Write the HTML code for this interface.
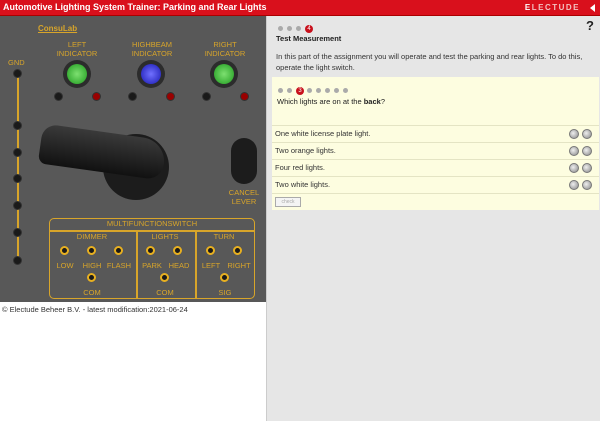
<!DOCTYPE html>
<html><head><style>
*{margin:0;padding:0;box-sizing:border-box}
body{width:600px;height:421px;overflow:hidden;background:#fff;font-family:"Liberation Sans",sans-serif;position:relative}
.hdr{position:absolute;left:0;top:0;width:600px;height:16px;background:#d9101c;border-bottom:1px solid #a00}
.hdr .t{position:absolute;left:3px;top:2px;color:#fff;font-size:9px;font-weight:bold}
.hdr .l{position:absolute;right:20px;top:3px;color:#f3c0c0;font-size:8px;letter-spacing:1.5px;font-weight:bold}
.panel{position:absolute;left:0;top:16px;width:266px;height:286px;background:#585858}
.y{color:#d8a52a;position:absolute;font-size:7.5px;text-align:center;line-height:9px}
.right{position:absolute;left:266px;top:16px;width:334px;height:405px;background:#e6e6e6;border-left:1px solid #ccc}
.dot{display:inline-block;width:5px;height:5px;border-radius:50%;background:#aaa;margin-right:4px;vertical-align:middle}
.rd{display:inline-block;width:8px;height:8px;border-radius:50%;background:#c8101c;color:#fff;font-size:6px;text-align:center;line-height:8px;vertical-align:middle}
.ybox{position:absolute;left:5px;top:61px;width:327px;height:133px;background:#fdfde0}
.row{position:absolute;left:0;width:327px;height:17px;border-top:1px solid #e4e4c4;font-size:7.5px;color:#333;padding:3px 3px}
.rb{position:absolute;top:3px;width:10px;height:10px;border-radius:50%;background:radial-gradient(circle at 40% 40%,#eee,#888);border:1px solid #777}
.bd{position:absolute;width:9px;height:9px;border-radius:50%;background:#1a1a1a;border:1px solid #333}
.jk{position:absolute;width:9px;height:9px;border-radius:50%;background:#1a1a1a;border:2px solid #e8b020}
</style></head><body>
<div class="hdr"><div class="t">Automotive Lighting System Trainer: Parking and Rear Lights</div><div class="l"><span style="color:#fff">E</span>LECTUDE</div>
<div style="position:absolute;right:5px;top:4px;width:0;height:0;border-top:4px solid transparent;border-bottom:4px solid transparent;border-right:5px solid #fff"></div></div>
<div class="panel">
 <div class="y" style="left:38px;top:8px;font-size:8px;font-weight:bold;text-decoration:underline">ConsuLab</div>
 <div class="y" style="left:8px;top:42px">GND</div>
 <div style="position:absolute;left:17px;top:58px;width:2px;height:190px;background:#d8a52a"></div>
 <div class="bd" style="left:13px;top:53px"></div><div class="bd" style="left:13px;top:105px"></div><div class="bd" style="left:13px;top:132px"></div><div class="bd" style="left:13px;top:158px"></div><div class="bd" style="left:13px;top:185px"></div><div class="bd" style="left:13px;top:212px"></div><div class="bd" style="left:13px;top:240px"></div>
 <div class="y" style="left:52px;top:24px;width:50px">LEFT<br>INDICATOR</div>
 <div class="y" style="left:124px;top:24px;width:56px">HIGHBEAM<br>INDICATOR</div>
 <div class="y" style="left:200px;top:24px;width:50px">RIGHT<br>INDICATOR</div>
 <div style="position:absolute;left:63px;top:44px;width:28px;height:28px;border-radius:50%;background:#2c2c2c"></div><div style="position:absolute;left:67px;top:48px;width:20px;height:20px;border-radius:50%;background:radial-gradient(circle,#7de070,#1e9a1e)"></div>
 <div style="position:absolute;left:137px;top:44px;width:28px;height:28px;border-radius:50%;background:#2c2c2c"></div><div style="position:absolute;left:141px;top:48px;width:20px;height:20px;border-radius:50%;background:radial-gradient(circle,#7070ff,#1818b0)"></div>
 <div style="position:absolute;left:210px;top:44px;width:28px;height:28px;border-radius:50%;background:#2c2c2c"></div><div style="position:absolute;left:214px;top:48px;width:20px;height:20px;border-radius:50%;background:radial-gradient(circle,#7de070,#1e9a1e)"></div>
 <div class="bd" style="left:54px;top:76px"></div><div class="bd" style="left:92px;top:76px;background:#900"></div>
 <div class="bd" style="left:128px;top:76px"></div><div class="bd" style="left:166px;top:76px;background:#900"></div>
 <div class="bd" style="left:202px;top:76px"></div><div class="bd" style="left:240px;top:76px;background:#900"></div>
 <div style="position:absolute;left:103px;top:118px;width:66px;height:66px;border-radius:50%;background:#1c1c1c"></div>
 <div style="position:absolute;left:40px;top:116px;width:125px;height:40px;border-radius:18px 30px 20px 10px;background:linear-gradient(#3a3a3a,#111);transform:rotate(8deg)"></div>
 <div style="position:absolute;left:231px;top:122px;width:26px;height:46px;border-radius:13px;background:#1c1c1c"></div>
 <div class="y" style="left:222px;top:172px;width:44px">CANCEL<br>LEVER</div>
 <div style="position:absolute;left:49px;top:202px;width:206px;height:81px;border:1.5px solid #d8a52a;border-radius:5px">
  <div style="position:absolute;left:0;top:11px;width:100%;height:1.5px;background:#d8a52a"></div>
  <div style="position:absolute;left:86px;top:12px;width:1.5px;height:68px;background:#d8a52a"></div>
  <div style="position:absolute;left:145px;top:12px;width:1.5px;height:68px;background:#d8a52a"></div>
 </div>
 <div class="y" style="left:49px;top:203px;width:206px">MULTIFUNCTIONSWITCH</div>
 <div class="y" style="left:70px;top:216px;width:44px">DIMMER</div>
 <div class="y" style="left:143px;top:216px;width:44px">LIGHTS</div>
 <div class="y" style="left:202px;top:216px;width:44px">TURN</div>
 <div class="jk" style="left:60px;top:230px"></div><div class="jk" style="left:87px;top:230px"></div><div class="jk" style="left:114px;top:230px"></div>
 <div class="jk" style="left:146px;top:230px"></div><div class="jk" style="left:173px;top:230px"></div>
 <div class="jk" style="left:206px;top:230px"></div><div class="jk" style="left:233px;top:230px"></div>
 <div class="y" style="left:52px;top:245px;width:26px">LOW</div><div class="y" style="left:79px;top:245px;width:26px">HIGH</div><div class="y" style="left:104px;top:245px;width:30px">FLASH</div>
 <div class="y" style="left:138px;top:245px;width:28px">PARK</div><div class="y" style="left:164px;top:245px;width:30px">HEAD</div>
 <div class="y" style="left:198px;top:245px;width:26px">LEFT</div><div class="y" style="left:224px;top:245px;width:30px">RIGHT</div>
 <div class="jk" style="left:87px;top:257px"></div><div class="jk" style="left:160px;top:257px"></div><div class="jk" style="left:220px;top:257px"></div>
 <div class="y" style="left:79px;top:272px;width:26px">COM</div><div class="y" style="left:152px;top:272px;width:26px">COM</div><div class="y" style="left:212px;top:272px;width:26px">SIG</div>
</div>
<div style="position:absolute;left:2px;top:305px;font-size:7.5px;color:#333">© Electude Beheer B.V. - latest modification:2021-06-24</div>
<div class="right">
 <div style="position:absolute;left:11px;top:4px"><span class="dot"></span><span class="dot"></span><span class="dot"></span><span class="rd">4</span></div>
 <div style="position:absolute;right:6px;top:2px;font-size:13px;font-weight:bold;color:#222">?</div>
 <div style="position:absolute;left:9px;top:18px;font-size:7.5px;font-weight:bold;color:#222">Test Measurement</div>
 <div style="position:absolute;left:9px;top:35px;width:322px;font-size:7.5px;color:#333;line-height:11px">In this part of the assignment you will operate and test the parking and rear lights. To do this, operate the light switch.</div>
 <div class="ybox">
  <div style="position:absolute;left:6px;top:5px"><span class="dot"></span><span class="dot"></span><span class="rd">3</span><span class="dot" style="margin-left:3px"></span><span class="dot"></span><span class="dot"></span><span class="dot"></span><span class="dot"></span></div>
  <div style="position:absolute;left:5px;top:20px;font-size:7.5px;color:#222">Which lights are on at the <b>back</b>?</div>
  <div class="row" style="top:48px">One white license plate light.<span class="rb" style="left:297px"></span><span class="rb" style="left:310px"></span></div>
  <div class="row" style="top:65px">Two orange lights.<span class="rb" style="left:297px"></span><span class="rb" style="left:310px"></span></div>
  <div class="row" style="top:82px">Four red lights.<span class="rb" style="left:297px"></span><span class="rb" style="left:310px"></span></div>
  <div class="row" style="top:99px">Two white lights.<span class="rb" style="left:297px"></span><span class="rb" style="left:310px"></span></div>
  <div class="row" style="top:116px;height:17px"><span style="display:block;width:26px;height:10px;border:1px solid #aaa;background:#f4f4f4;font-size:5px;color:#aaa;text-align:center;line-height:8px">check</span></div>
 </div>
</div>
</body></html>
